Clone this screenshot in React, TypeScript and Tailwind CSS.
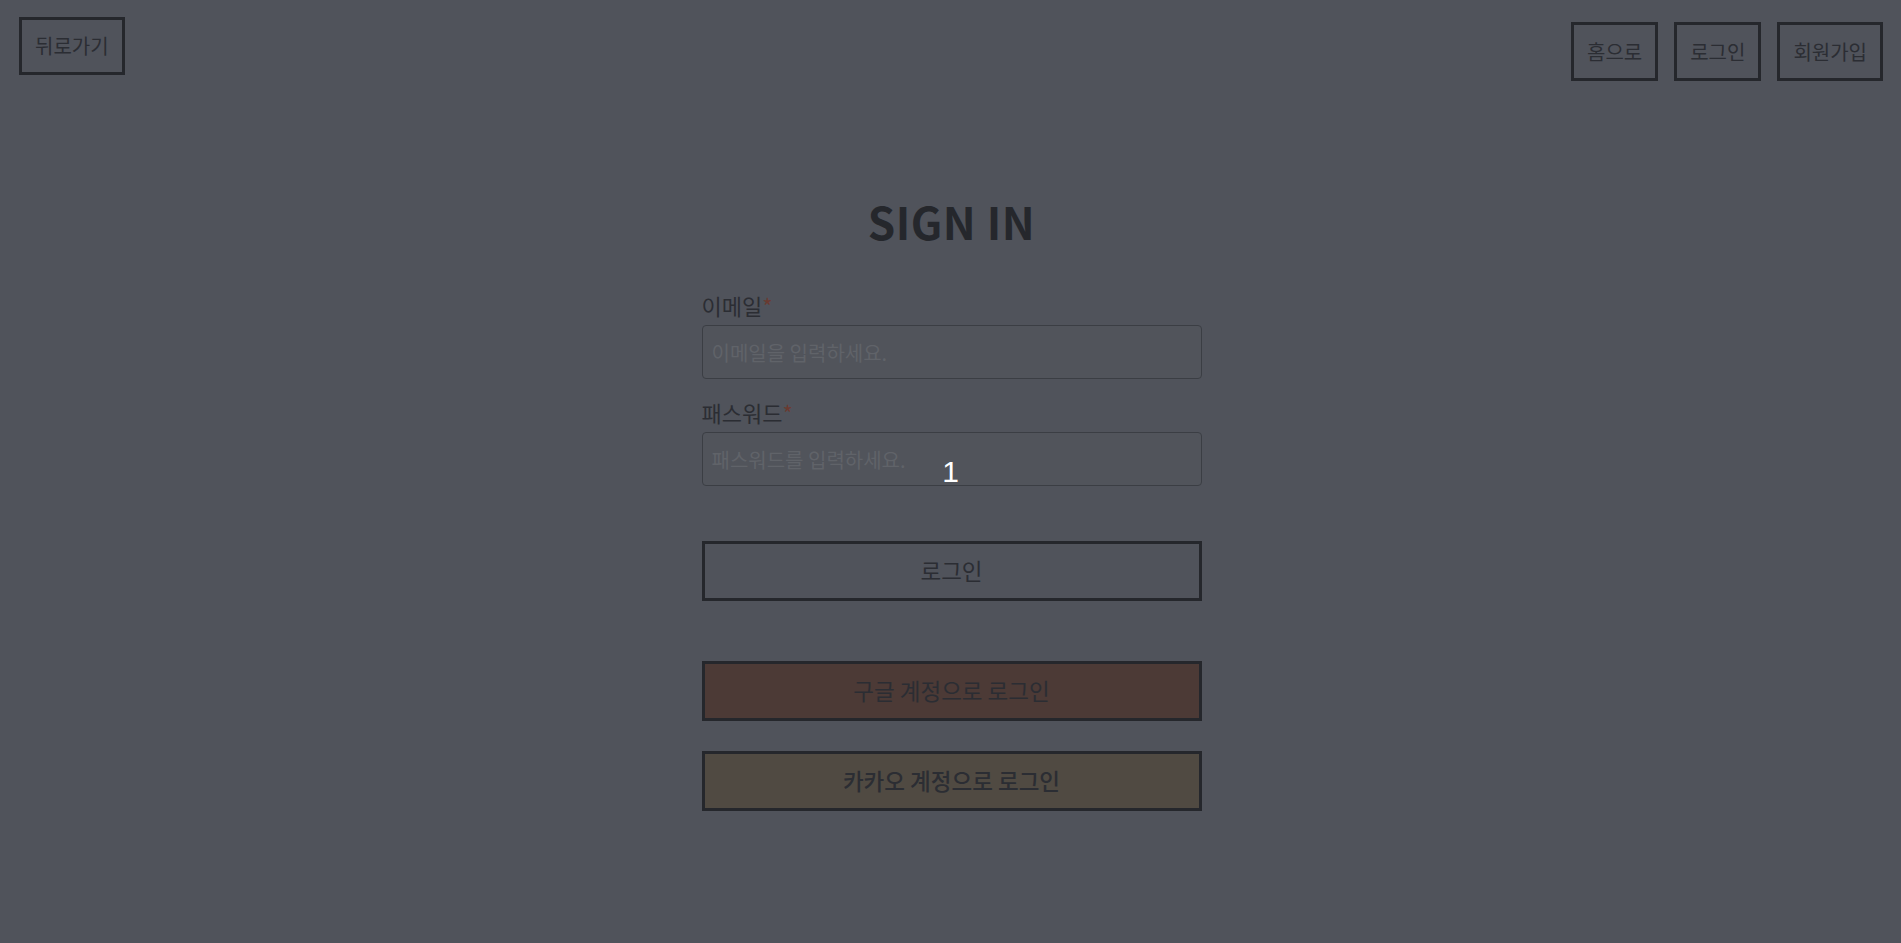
import React from "react";

const font = "font-['Noto_Sans_CJK_KR','Noto_Sans',sans-serif]";

function NavButton({ label }: { label: string }) {
  return (
    <button className="h-[59px] border-[3px] border-[#25272c] px-[13px] text-[20px] text-[#2b2d33]">
      {label}
    </button>
  );
}

function Field({ label, placeholder, type }: { label: string; placeholder: string; type: string }) {
  return (
    <div className="flex flex-col">
      <label className="text-[22px] leading-[30px] text-[#2b2d33]">
        {label}
        <span className="text-[#6b3a30]">*</span>
      </label>
      <input
        type={type}
        placeholder={placeholder}
        className="mt-[5px] h-[54px] rounded-[4px] border border-[#3b3e44] bg-[#51545b] px-[9px] text-[20px] text-[#2b2d33] outline-none placeholder:text-[#606369]"
      />
    </div>
  );
}

export default function App() {
  return (
    <div className={`relative min-h-screen w-full overflow-hidden bg-[#50535b] ${font}`}>
      {/* 상단 네비게이션 */}
      <header className="flex items-start justify-between">
        <button className="ml-[19px] mt-[17px] h-[58px] border-[3px] border-[#25272c] px-[13px] text-[20px] text-[#2b2d33]">
          뒤로가기
        </button>
        <nav className="mr-[18px] mt-[22px] flex gap-4">
          <NavButton label="홈으로" />
          <NavButton label="로그인" />
          <NavButton label="회원가입" />
        </nav>
      </header>

      <main className="flex flex-col items-center pl-[2px] pt-[106px]">
        <h1 className="text-[44px] font-bold leading-[69px] tracking-[0.5px] text-[#25272c]">SIGN IN</h1>

        <form className="mt-[34px] flex w-[500px] flex-col gap-[18px]">
          <Field label="이메일" placeholder="이메일을 입력하세요." type="email" />
          <Field label="패스워드" placeholder="패스워드를 입력하세요." type="password" />

          <button
            type="button"
            className="mt-[37px] h-[60px] border-[3px] border-[#25272c] text-[22.5px] text-[#2b2d33]"
          >
            로그인
          </button>

          <button
            type="button"
            className="mt-[42px] h-[60px] border-[3px] border-[#25272c] bg-[#4c3a36] text-[22.5px] text-[#2b2d33]"
          >
            구글 계정으로 로그인
          </button>
          <button
            type="button"
            className="mt-[12px] h-[60px] border-[3px] border-[#25272c] bg-[#504a42] text-[22.5px] font-medium text-[#2b2d33]"
          >
            카카오 계정으로 로그인
          </button>
        </form>
      </main>

      {/* 로딩 오버레이 */}
      <div className="pointer-events-none absolute inset-0 flex items-center justify-center">
        <span className="font-['Liberation_Sans',sans-serif] text-[30px] text-white">1</span>
      </div>
    </div>
  );
}
